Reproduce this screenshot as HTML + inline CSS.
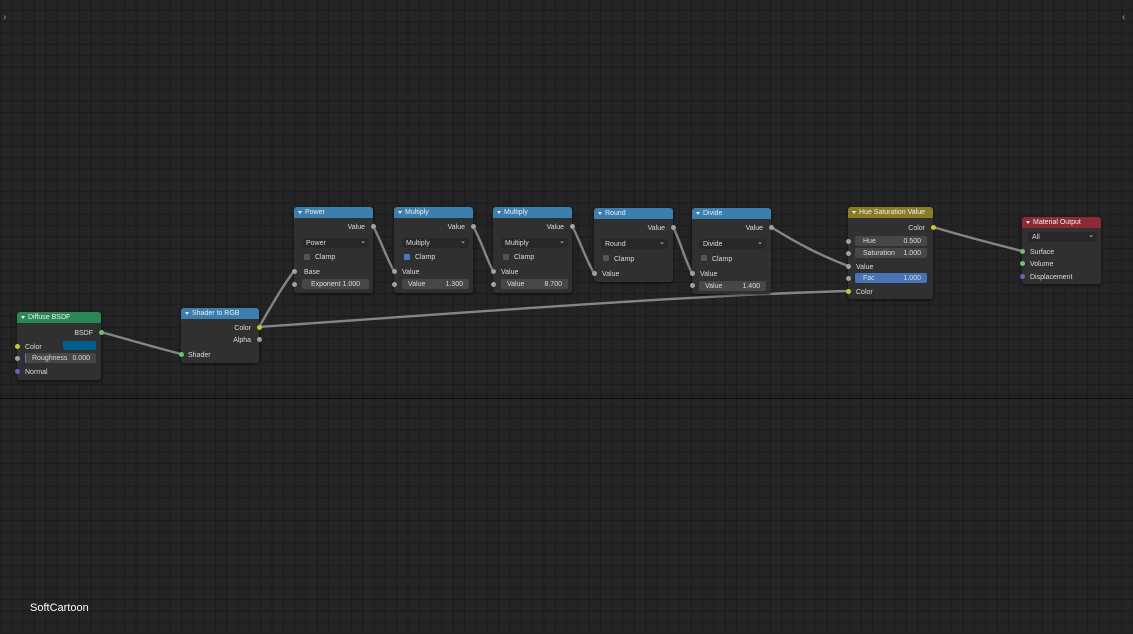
<!DOCTYPE html>
<html><head><meta charset="utf-8"><style>
*{margin:0;padding:0;box-sizing:border-box}
body{width:1133px;height:634px;overflow:hidden;position:relative;font-family:"Liberation Sans",sans-serif;font-size:7px;color:#dcdcdc;
background-color:#242424;
background-image:linear-gradient(to right,#1b1b1b 1px,transparent 1px),linear-gradient(to bottom,#1b1b1b 1px,transparent 1px);
background-size:11.33px 11.33px;background-position:11px 10px;}
.major{position:absolute;left:0;width:1133px;top:398px;height:1px;background:#0c0c0c}
.n{position:absolute;background:#303030;border-radius:3px;box-shadow:0 1px 3px rgba(0,0,0,.6)}
.h{height:11px;border-radius:3px 3px 0 0;padding-left:11px;line-height:12px;color:#eee;position:relative}
.h:before{content:"";position:absolute;left:4px;top:4px;border-left:2px solid transparent;border-right:2px solid transparent;border-top:3px solid #eee}
.t{position:absolute;white-space:nowrap;line-height:11px}
.r{right:8px;text-align:right}
.dd{position:absolute;height:10px;background:#282828;border-radius:3px;padding-left:4px;line-height:11px}
.dd:after{content:"⌄";position:absolute;right:3px;top:-2px;font-size:7px}
.f{position:absolute;height:10px;background:#474747;border-radius:2px;line-height:11px;padding:0 6px}
.f span{float:right}
.cb{position:absolute;width:6px;height:6px;background:#545454;border-radius:1px}
.s{position:absolute;width:5px;height:5px;border-radius:50%;background:#a1a1a1;margin:-2.5px 0 0 -2.5px}
</style></head><body>
<div class="major"></div>
<svg width="1133" height="634" style="position:absolute;left:0;top:0" fill="none" stroke="#858585" stroke-width="2.4">
<path d="M101 332 C130 340,150 346,181 354"/>
<path d="M259 327 C275 300,280 290,294 271"/>
<path d="M259 327 C500 310,700 295,848 291"/>
<path d="M373 226 C383 245,385 255,394 271"/>
<path d="M473 226 C483 245,485 255,493 271"/>
<path d="M572 226 C582 245,585 258,594 273"/>
<path d="M673 227 C682 245,684 258,692 273"/>
<path d="M771 227 C800 245,820 255,848 266"/>
<path d="M933 227 C960 235,990 243,1022 251"/>
</svg>
<div class="t" style="left:3px;top:12px;font-size:10px;color:#999">›</div>
<div class="t" style="left:1122px;top:12px;font-size:10px;color:#999">‹</div>

<div class="n" style="left:17px;top:312px;width:84px;height:68px">
<div class="h" style="background:#2b8757">Diffuse BSDF</div>
<div class="t r" style="top:16px">BSDF</div>
<div class="t" style="left:8px;top:30px">Color</div>
<div style="position:absolute;left:46px;top:29px;width:33px;height:9px;background:#015f8c;border-radius:2px"></div>
<div class="f" style="left:8px;top:41px;width:71px;border-left:1px solid #4a7fc0">Roughness<span>0.000</span></div>
<div class="t" style="left:8px;top:55px">Normal</div>
</div>
<div class="s" style="left:101px;top:332px;background:#63c763"></div>
<div class="s" style="left:17px;top:346px;background:#c7c729"></div>
<div class="s" style="left:17px;top:358px"></div>
<div class="s" style="left:17px;top:371px;background:#6363c7"></div>

<div class="n" style="left:181px;top:308px;width:78px;height:55px">
<div class="h" style="background:#3b7fae">Shader to RGB</div>
<div class="t r" style="top:15px">Color</div>
<div class="t r" style="top:27px">Alpha</div>
<div class="t" style="left:7px;top:42px">Shader</div>
</div>
<div class="s" style="left:259px;top:327px;background:#c7c729"></div>
<div class="s" style="left:259px;top:339px"></div>
<div class="s" style="left:181px;top:354px;background:#63c763"></div>

<div class="n" style="left:294px;top:207px;width:79px;height:86px">
<div class="h" style="background:#3b7fae">Power</div>
<div class="t r" style="top:15px">Value</div>
<div class="dd" style="left:8px;top:31px;width:67px">Power</div>
<div class="cb" style="left:10px;top:47px"></div><div class="t" style="left:21px;top:45px">Clamp</div>
<div class="t" style="left:10px;top:60px">Base</div>
<div class="f" style="left:8px;top:72px;width:67px;text-align:center">Exponent 1.000</div>
</div>
<div class="s" style="left:373px;top:226px"></div>
<div class="s" style="left:294px;top:271px"></div>
<div class="s" style="left:294px;top:284px"></div>

<div class="n" style="left:394px;top:207px;width:79px;height:86px">
<div class="h" style="background:#3b7fae">Multiply</div>
<div class="t r" style="top:15px">Value</div>
<div class="dd" style="left:8px;top:31px;width:67px">Multiply</div>
<div class="cb" style="left:10px;top:47px;background:#4a77c2"></div><div class="t" style="left:21px;top:45px">Clamp</div>
<div class="t" style="left:8px;top:60px">Value</div>
<div class="f" style="left:8px;top:72px;width:67px">Value<span>1.300</span></div>
</div>
<div class="s" style="left:473px;top:226px"></div>
<div class="s" style="left:394px;top:271px"></div>
<div class="s" style="left:394px;top:284px"></div>

<div class="n" style="left:493px;top:207px;width:79px;height:86px">
<div class="h" style="background:#3b7fae">Multiply</div>
<div class="t r" style="top:15px">Value</div>
<div class="dd" style="left:8px;top:31px;width:67px">Multiply</div>
<div class="cb" style="left:10px;top:47px"></div><div class="t" style="left:21px;top:45px">Clamp</div>
<div class="t" style="left:8px;top:60px">Value</div>
<div class="f" style="left:8px;top:72px;width:67px">Value<span>8.700</span></div>
</div>
<div class="s" style="left:572px;top:226px"></div>
<div class="s" style="left:493px;top:271px"></div>
<div class="s" style="left:493px;top:284px"></div>

<div class="n" style="left:594px;top:208px;width:79px;height:74px">
<div class="h" style="background:#3b7fae">Round</div>
<div class="t r" style="top:15px">Value</div>
<div class="dd" style="left:7px;top:31px;width:67px">Round</div>
<div class="cb" style="left:9px;top:47px"></div><div class="t" style="left:20px;top:46px">Clamp</div>
<div class="t" style="left:8px;top:61px">Value</div>
</div>
<div class="s" style="left:673px;top:227px"></div>
<div class="s" style="left:594px;top:273px"></div>

<div class="n" style="left:692px;top:208px;width:79px;height:86px">
<div class="h" style="background:#3b7fae">Divide</div>
<div class="t r" style="top:15px">Value</div>
<div class="dd" style="left:7px;top:31px;width:67px">Divide</div>
<div class="cb" style="left:9px;top:47px"></div><div class="t" style="left:20px;top:46px">Clamp</div>
<div class="t" style="left:8px;top:61px">Value</div>
<div class="f" style="left:7px;top:73px;width:67px">Value<span>1.400</span></div>
</div>
<div class="s" style="left:771px;top:227px"></div>
<div class="s" style="left:692px;top:273px"></div>
<div class="s" style="left:692px;top:285px"></div>

<div class="n" style="left:848px;top:207px;width:85px;height:92px">
<div class="h" style="background:#8a7c27">Hue Saturation Value</div>
<div class="t r" style="top:16px">Color</div>
<div class="f" style="left:7px;top:29px;width:72px;padding-left:8px">Hue<span>0.500</span></div>
<div class="f" style="left:7px;top:41px;width:72px;padding-left:8px">Saturation<span>1.000</span></div>
<div class="t" style="left:8px;top:55px">Value</div>
<div class="f" style="left:7px;top:66px;width:72px;background:#4772b3;padding-left:8px">Fac<span>1.000</span></div>
<div class="t" style="left:8px;top:80px">Color</div>
</div>
<div class="s" style="left:933px;top:227px;background:#c7c729"></div>
<div class="s" style="left:848px;top:241px"></div>
<div class="s" style="left:848px;top:253px"></div>
<div class="s" style="left:848px;top:266px"></div>
<div class="s" style="left:848px;top:278px"></div>
<div class="s" style="left:848px;top:291px;background:#c7c729"></div>

<div class="n" style="left:1022px;top:217px;width:79px;height:67px">
<div class="h" style="background:#8c2a36">Material Output</div>
<div class="dd" style="left:6px;top:15px;width:69px">All</div>
<div class="t" style="left:8px;top:30px">Surface</div>
<div class="t" style="left:8px;top:42px">Volume</div>
<div class="t" style="left:8px;top:55px">Displacement</div>
</div>
<div class="s" style="left:1022px;top:251px;background:#63c763"></div>
<div class="s" style="left:1022px;top:263px;background:#63c763"></div>
<div class="s" style="left:1022px;top:276px;background:#6363c7"></div>

<div class="t" style="left:30px;top:602px;font-size:11px;line-height:13px;color:#fff">SoftCartoon</div>
</body></html>
